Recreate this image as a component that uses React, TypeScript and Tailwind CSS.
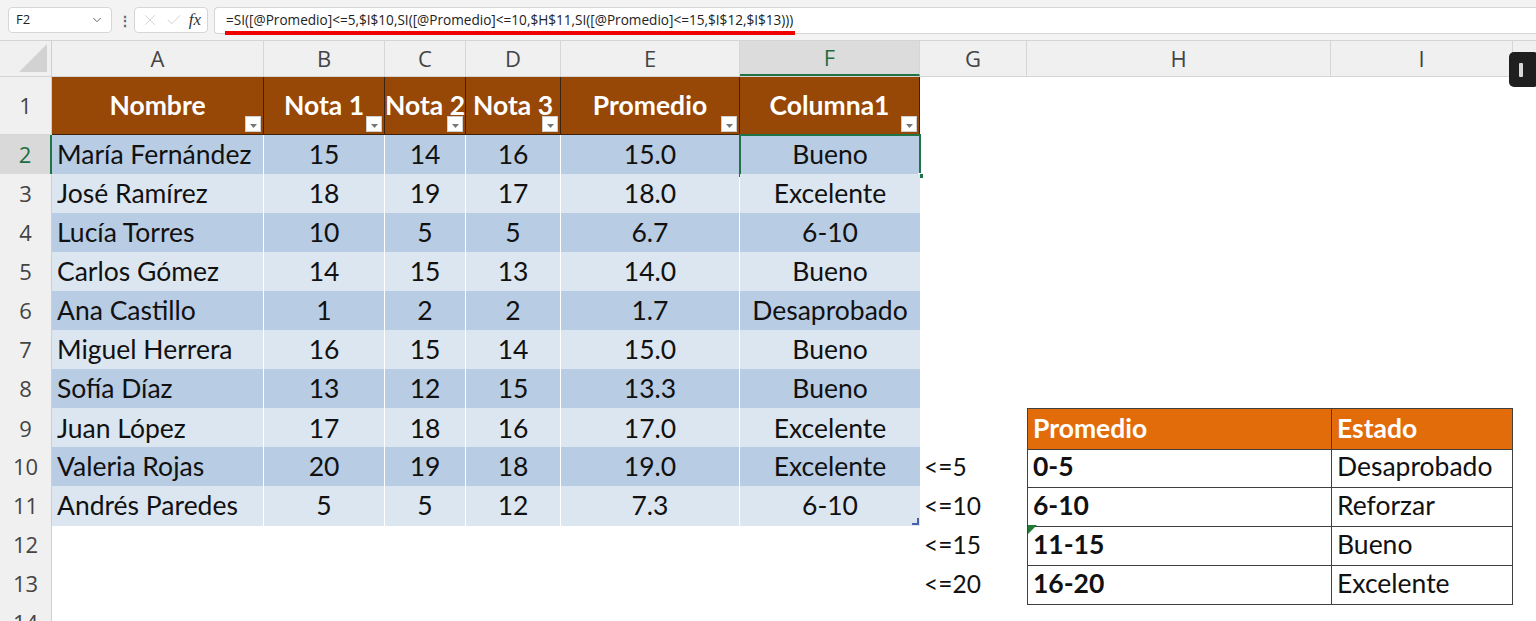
import { ChevronDown, X, Check } from 'lucide-react'

type Row = [string, number, number, number, string, string]

const DATA: Row[] = [
  ['María Fernández', 15, 14, 16, '15.0', 'Bueno'],
  ['José Ramírez', 18, 19, 17, '18.0', 'Excelente'],
  ['Lucía Torres', 10, 5, 5, '6.7', '6-10'],
  ['Carlos Gómez', 14, 15, 13, '14.0', 'Bueno'],
  ['Ana Castillo', 1, 2, 2, '1.7', 'Desaprobado'],
  ['Miguel Herrera', 16, 15, 14, '15.0', 'Bueno'],
  ['Sofía Díaz', 13, 12, 15, '13.3', 'Bueno'],
  ['Juan López', 17, 18, 16, '17.0', 'Excelente'],
  ['Valeria Rojas', 20, 19, 18, '19.0', 'Excelente'],
  ['Andrés Paredes', 5, 5, 12, '7.3', '6-10'],
]

const HEADERS = ['Nombre', 'Nota 1', 'Nota 2', 'Nota 3', 'Promedio', 'Columna1']
const LETTERS = ['A', 'B', 'C', 'D', 'E', 'F', 'G', 'H', 'I']

// filas 10-13: etiqueta en G, rango en H, estado en I
const LOOKUP: Record<number, [string, string, string]> = {
  10: ['<=5', '0-5', 'Desaprobado'],
  11: ['<=10', '6-10', 'Reforzar'],
  12: ['<=15', '11-15', 'Bueno'],
  13: ['<=20', '16-20', 'Excelente'],
}

const GRID = 'grid grid-cols-[52px_212px_121px_81px_95px_179px_180px_107px_304px_182px_1fr]'
const CELL_FONT = "font-['Lato','Liberation_Sans',sans-serif] text-[26.5px] text-[#111]"
const UI_FONT = "font-['Open_Sans','Noto_Sans',sans-serif]"

function FilterButton() {
  return (
    <div className="absolute right-[2px] bottom-[2px] w-[16px] h-[16px] bg-white border border-[#cfcfcf] flex items-end justify-center pb-[3px]">
      <svg width="7" height="4" viewBox="0 0 7 4"><path d="M0 0h7L3.5 4z" fill="#777" /></svg>
    </div>
  )
}

function RowHeader({ n, active }: { n: number; active?: boolean }) {
  return (
    <div
      className={`flex items-center justify-center border-b border-[#d6d6d6] text-[22px] ${UI_FONT} ${
        active ? 'bg-[#d9d9d9] text-[#1e6e42] border-r-2 border-r-[#217346]' : 'bg-[#f0f0f0] text-[#444] border-r border-r-[#cfcfcf]'
      }`}
    >
      {n}
    </div>
  )
}

export default function App() {
  const bodyRows = Array.from({ length: 13 }, (_, i) => i + 2)

  return (
    <div className="w-[1536px] h-[621px] overflow-hidden bg-white">
      {/* barra de fórmulas */}
      <div className={`h-[40px] bg-[#f3f3f3] flex items-center gap-[6px] pl-[8px] ${UI_FONT}`}>
        <div className="w-[104px] h-[26px] bg-white border border-[#d6d6d6] rounded-[4px] flex items-center justify-between px-[7px] text-[13px] text-[#222]">
          <span>F2</span>
          <ChevronDown className="w-[14px] h-[14px] text-[#555]" strokeWidth={1.5} />
        </div>
        <span className="text-[#666] text-[14px] font-bold w-[10px] text-center">⋮</span>
        <div className="w-[74px] h-[26px] bg-white border border-[#d6d6d6] rounded-[4px] flex items-center justify-around px-[3px]">
          <X className="w-[18px] h-[18px] text-[#c4c4c4]" strokeWidth={1} />
          <Check className="w-[18px] h-[18px] text-[#c4c4c4]" strokeWidth={1} />
          <span className="font-['Liberation_Serif',serif] italic text-[17px] text-[#333]">fx</span>
        </div>
        <div className="flex-1 h-[27px] bg-white border border-[#d6d6d6] border-r-0 rounded-l-[4px] flex items-center pl-[11px] text-[13.6px] text-[#222]">
          <span className="relative">
            =SI([@Promedio]&lt;=5,$I$10,SI([@Promedio]&lt;=10,$H$11,SI([@Promedio]&lt;=15,$I$12,$I$13)))
            <span className="absolute left-[-1px] right-[-2px] bottom-[-5px] h-[4px] bg-[#f00000]" />
          </span>
        </div>
      </div>

      {/* encabezado de columnas */}
      <div className={`${GRID} h-[37px] bg-[#f0f0f0] border-y border-[#d4d4d4] ${UI_FONT}`}>
        <div className="relative border-r border-[#cfcfcf]">
          <svg className="absolute right-[4px] bottom-[4px]" width="28" height="28" viewBox="0 0 28 28">
            <path d="M28 0V28H0z" fill="#d2d2d2" />
          </svg>
        </div>
        {LETTERS.map(l => (
          <div
            key={l}
            className={`flex items-center justify-center text-[22px] border-r border-[#d6d6d6] ${
              l === 'F' ? 'bg-[#dcdcdc] text-[#1e6e42] border-b-2 border-b-[#217346]' : 'text-[#444]'
            }`}
          >
            {l}
          </div>
        ))}
        <div className="relative">
          <div className="absolute left-[-4px] top-[11px] w-[30px] h-[35px] rounded-[5px] bg-[#1f1f1f] flex items-center justify-center">
            <div className="w-[4px] h-[14px] rounded-[1px] bg-[#d8d8d8] ml-[-6px]" />
          </div>
        </div>
      </div>

      {/* fila 1: cabecera de la tabla */}
      <div className={`${GRID} h-[58px]`}>
        <RowHeader n={1} />
        {HEADERS.map(h => (
          <div
            key={h}
            className="relative bg-[#974706] border-r border-b border-[#3a2410] flex items-center justify-center whitespace-nowrap font-['Lato','Liberation_Sans',sans-serif] font-bold text-[26.5px] text-white"
          >
            {h}
            <FilterButton />
          </div>
        ))}
        <div />
        <div />
        <div />
        <div />
      </div>

      {bodyRows.map(r => {
        const d = DATA[r - 2]
        const dark = r % 2 === 0
        const bg = dark ? 'bg-[#b8cce4]' : 'bg-[#dce6f1]'
        const lk = LOOKUP[r]
        return (
          <div key={r} className={`${GRID} h-[39px]`}>
            <RowHeader n={r} active={r === 2} />
            {d ? (
              <>
                <div className={`${bg} ${CELL_FONT} border-r border-b border-white flex items-center pl-[5px] whitespace-nowrap`}>{d[0]}</div>
                {d.slice(1, 5).map((v, i) => (
                  <div key={i} className={`${bg} ${CELL_FONT} border-r border-b border-white flex items-center justify-center`}>{v}</div>
                ))}
                <div
                  className={`relative ${bg} ${CELL_FONT} border-b border-white flex items-center justify-center ${
                    r === 2 ? 'outline-2 outline-[#217346] -outline-offset-1' : ''
                  }`}
                >
                  {d[5]}
                  {r === 2 && <div className="absolute right-[-4px] bottom-[-4px] w-[6px] h-[6px] bg-[#217346] border border-white" />}
                  {r === 11 && (
                    <svg className="absolute right-[1px] bottom-[1px]" width="7" height="7" viewBox="0 0 7 7">
                      <path d="M5 0h2v7H0V5h5z" fill="#4a5fb0" />
                    </svg>
                  )}
                </div>
              </>
            ) : (
              <>
                <div />
                <div />
                <div />
                <div />
                <div />
                <div />
              </>
            )}
            {/* columna G */}
            <div className="font-['Lato','Liberation_Sans',sans-serif] text-[24.5px] text-[#111] flex items-center pl-[4px]">{lk ? lk[0] : ''}</div>
            {/* columnas H / I */}
            {r === 9 ? (
              <>
                <div className="bg-[#e26b0a] border border-r-0 border-[#404040] flex items-center pl-[5px] font-['Lato','Liberation_Sans',sans-serif] font-bold text-[26.5px] text-white">
                  Promedio
                </div>
                <div className="bg-[#e26b0a] border border-[#404040] flex items-center pl-[5px] font-['Lato','Liberation_Sans',sans-serif] font-bold text-[26.5px] text-white">
                  Estado
                </div>
              </>
            ) : lk ? (
              <>
                <div className={`relative border-l border-b border-[#404040] flex items-center pl-[5px] font-bold ${CELL_FONT}`}>
                  {lk[1]}
                  {r === 12 && (
                    <svg className="absolute left-0 top-0" width="9" height="9" viewBox="0 0 9 9">
                      <path d="M0 0h9L0 9z" fill="#1e7b34" />
                    </svg>
                  )}
                </div>
                <div className={`border-x border-b border-[#404040] flex items-center pl-[5px] ${CELL_FONT}`}>{lk[2]}</div>
              </>
            ) : (
              <>
                <div />
                <div />
              </>
            )}
            <div />
          </div>
        )
      })}
    </div>
  )
}
